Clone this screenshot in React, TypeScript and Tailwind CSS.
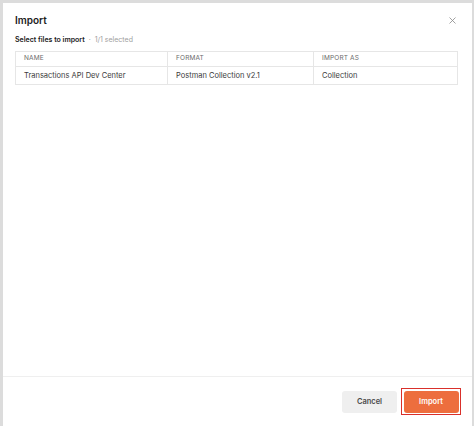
import React from 'react'

const rows = [
  { name: 'Transactions API Dev Center', format: 'Postman Collection v2.1', importAs: 'Collection' },
]

export default function App() {
  return (
    <div
      className="h-[426px] w-[474px] overflow-hidden bg-[#dcdcdc] pl-[3px] pr-[2px] pt-[3px]"
      style={{ fontFamily: 'Inter, "Noto Sans", sans-serif' }}
    >
      <div className="flex h-full flex-col bg-white">
        {/* header */}
        <div className="flex items-center justify-between pl-3 pr-[14px] pt-[10px]">
          <h2 className="text-[10px] font-semibold leading-[14px] text-[#212121]">Import</h2>
          <button className="flex h-3 w-3 items-center justify-center text-[#8a8a8a]">
            <svg width="7" height="7" viewBox="0 0 7 7" fill="none" stroke="currentColor" strokeWidth="0.8">
              <path d="M0.5 0.5L6.5 6.5M6.5 0.5L0.5 6.5" />
            </svg>
          </button>
        </div>

        <div className="flex-1 pl-3 pr-[14px] pt-[8px]">
          <p className="text-[7px] leading-[10px] text-[#212121]">
            <span className="font-semibold">Select files to import</span>
            <span className="text-[#a0a0a0]"> &nbsp;·&nbsp; 1/1 selected</span>
          </p>

          <table className="mt-[6px] w-full table-fixed border-collapse text-left text-[#3a3a3a]">
            <thead>
              <tr className="h-[15px]">
                <th className="w-[152px] border border-[#e6e6e6] px-2 text-[6.5px] font-normal tracking-wide text-[#6b6b6b]">NAME</th>
                <th className="w-[146px] border border-[#e6e6e6] px-2 text-[6.5px] font-normal tracking-wide text-[#6b6b6b]">FORMAT</th>
                <th className="border border-[#e6e6e6] px-2 text-[6.5px] font-normal tracking-wide text-[#6b6b6b]">IMPORT AS</th>
              </tr>
            </thead>
            <tbody>
              {rows.map((r) => (
                <tr key={r.name} className="h-[18px]">
                  <td className="border border-[#e6e6e6] px-2 text-[7.5px]">{r.name}</td>
                  <td className="border border-[#e6e6e6] px-2 text-[7.5px]">{r.format}</td>
                  <td className="border border-[#e6e6e6] px-2 text-[7.5px]">{r.importAs}</td>
                </tr>
              ))}
            </tbody>
          </table>
        </div>

        {/* footer */}
        <div className="flex items-center justify-end gap-[4px] border-t border-[#efefef] pb-[11px] pl-3 pr-[11px] pt-[11px]">
          <button className="h-[22px] w-[55px] rounded-[3px] bg-[#efefef] text-[7.5px] font-semibold text-[#4a4a4a]">
            Cancel
          </button>
          <div className="border-[1.5px] border-[#d9302b] p-[1.5px]">
            <button className="block h-[22px] w-[55px] rounded-[3px] bg-[#ed6e3e] text-[7.5px] font-semibold text-white">
              Import
            </button>
          </div>
        </div>
      </div>
    </div>
  )
}
